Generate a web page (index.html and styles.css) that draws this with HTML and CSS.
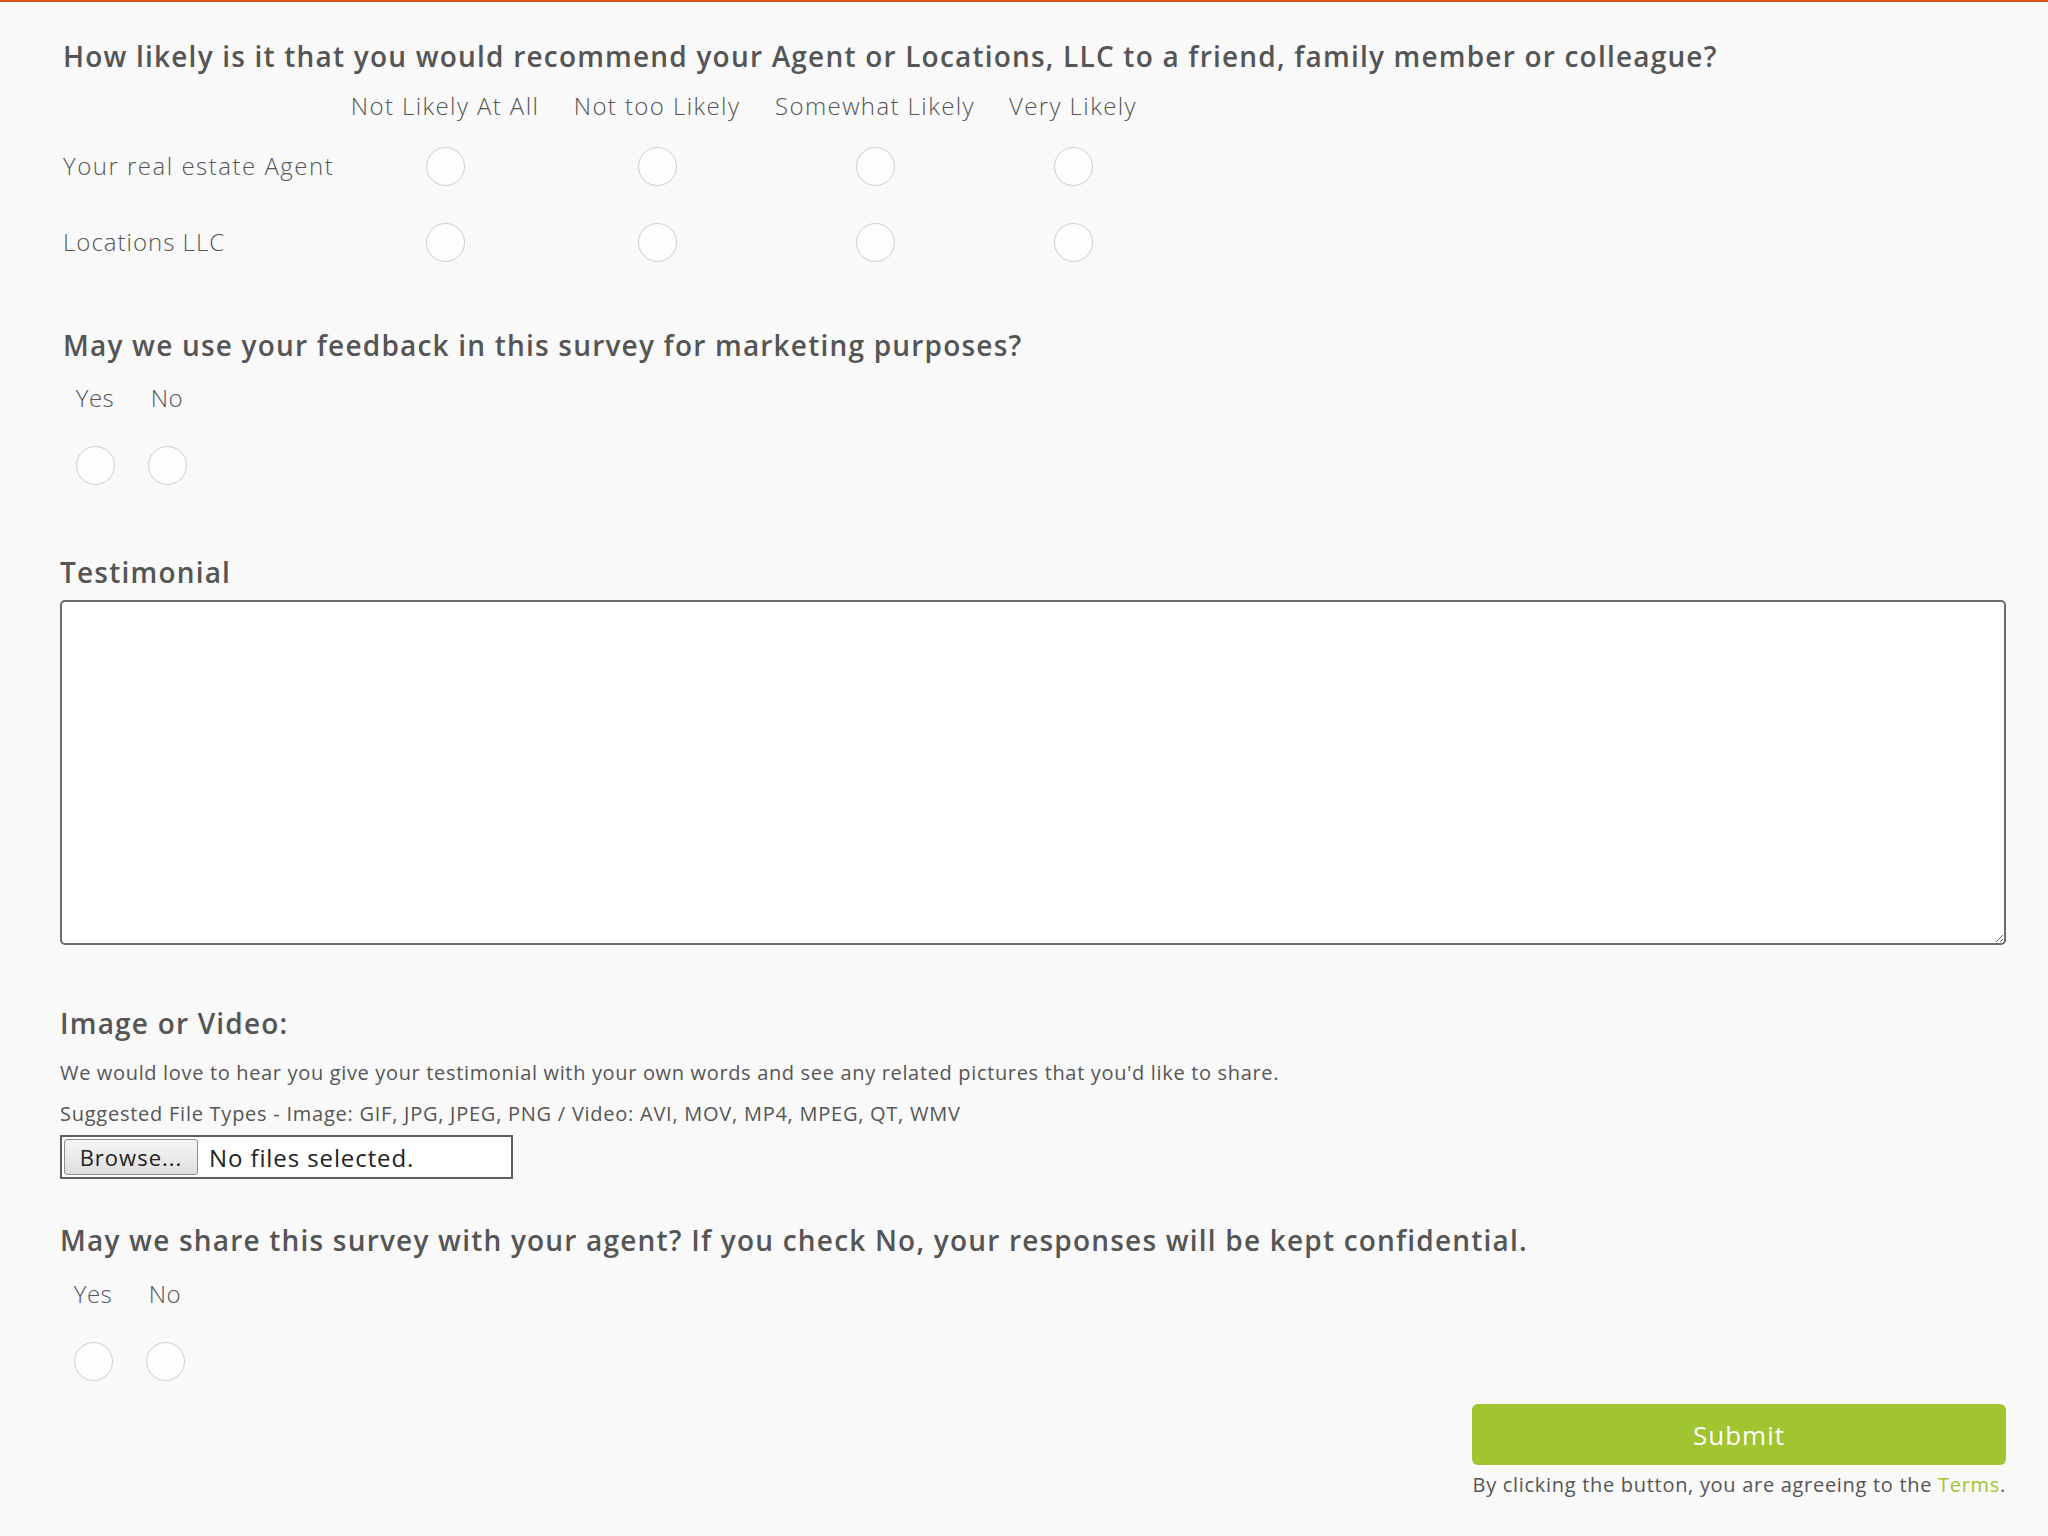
FILE: index.html
```html
<!DOCTYPE html>
<html lang="en">
<head>
<meta charset="utf-8">
<title>Survey</title>
<link rel="stylesheet" href="styles.css">
</head>
<body>
<div class="topbar"></div>
<form class="survey">
  <section class="q q-first">
    <h2 class="q-title">How likely is it that you would recommend your Agent or Locations, LLC to a friend, family member or colleague?</h2>
    <div class="matrix">
      <div class="m-blank"></div>
      <div class="m-head">Not Likely At All</div>
      <div class="m-head">Not too Likely</div>
      <div class="m-head">Somewhat Likely</div>
      <div class="m-head">Very Likely</div>

      <div class="m-label">Your real estate Agent</div>
      <div class="m-cell"><input type="radio" class="radio" name="agent"></div>
      <div class="m-cell"><input type="radio" class="radio" name="agent"></div>
      <div class="m-cell"><input type="radio" class="radio" name="agent"></div>
      <div class="m-cell"><input type="radio" class="radio" name="agent"></div>

      <div class="m-label m-label-short">Locations LLC</div>
      <div class="m-cell"><input type="radio" class="radio" name="llc"></div>
      <div class="m-cell"><input type="radio" class="radio" name="llc"></div>
      <div class="m-cell"><input type="radio" class="radio" name="llc"></div>
      <div class="m-cell"><input type="radio" class="radio" name="llc"></div>
    </div>
  </section>

  <section class="q q-marketing">
    <h2 class="q-title">May we use your feedback in this survey for marketing purposes?</h2>
    <div class="yesno">
      <span class="yn-label">Yes</span>
      <span class="yn-label">No</span>
      <input type="radio" class="radio" name="marketing">
      <input type="radio" class="radio" name="marketing">
    </div>
  </section>

  <section class="q q-testimonial">
    <h2 class="q-title">Testimonial</h2>
    <textarea class="testimonial"></textarea>
  </section>

  <section class="q q-media">
    <h2 class="q-title q-title-md">Image or Video:</h2>
    <p class="note">We would love to hear you give your testimonial with your own words and see any related pictures that you'd like to share.</p>
    <p class="note note-types">Suggested File Types - Image: GIF, JPG, JPEG, PNG / Video: AVI, MOV, MP4, MPEG, QT, WMV</p>
    <div class="filebox">
      <span class="browse">Browse...</span>
      <span class="filename">No files selected.</span>
    </div>
  </section>

  <section class="q q-share">
    <h2 class="q-title">May we share this survey with your agent? If you check No, your responses will be kept confidential.</h2>
    <div class="yesno yesno-share">
      <span class="yn-label">Yes</span>
      <span class="yn-label">No</span>
      <input type="radio" class="radio" name="share">
      <input type="radio" class="radio" name="share">
    </div>
  </section>

  <div class="submit-area">
    <button type="button" class="submit">Submit</button>
    <p class="terms">By clicking the button, you are agreeing to the <a class="terms-link">Terms</a>.</p>
  </div>
</form>
</body>
</html>
```

FILE: styles.css
```css
html, body {
  margin: 0;
  padding: 0;
}

body {
  background: #f9f9f9;
  font-family: "Open Sans", "DejaVu Sans", sans-serif;
  color: #555555;
}

.topbar {
  height: 2px;
  background: #dc5624;
}

.survey {
  padding: 0 42px 0 60px;
}

.q-title {
  margin: 0;
  font-size: 28px;
  line-height: 36px;
  font-weight: 600;
  letter-spacing: 1.2px;
  color: #555555;
  white-space: nowrap;
}

.q-title-md {
  line-height: 34px;
}

.q-first {
  padding-top: 36px;
}

.q-first .q-title {
  padding-left: 3px;
}

.matrix {
  display: grid;
  grid-template-columns: 273px 224px 200px 236px 160px;
  grid-template-rows: 38px 76px 76px;
  margin-top: 16px;
}

.m-head {
  align-self: start;
  text-align: center;
  font-size: 24px;
  line-height: 32px;
  font-weight: 300;
  letter-spacing: 1.4px;
  color: #555555;
  white-space: nowrap;
}

.m-label {
  align-self: center;
  padding-left: 3px;
  font-size: 24px;
  line-height: 32px;
  font-weight: 300;
  letter-spacing: 1.5px;
  color: #555555;
  white-space: nowrap;
}

.m-label-short {
  letter-spacing: 1px;
}

.m-cell {
  display: flex;
  align-items: center;
  justify-content: center;
}

.radio {
  appearance: none;
  -webkit-appearance: none;
  margin: 0;
  width: 39px;
  height: 39px;
  border-radius: 50%;
  border: 1.5px solid #cdcdcd;
  background: #fdfdfd;
  justify-self: center;
}

.q-marketing {
  margin-top: 47px;
}

.q-marketing .q-title {
  padding-left: 3px;
}

.yesno {
  display: grid;
  grid-template-columns: 56px 56px;
  column-gap: 16px;
  row-gap: 32px;
  padding-left: 7px;
  margin-top: 19px;
  align-items: center;
}

.yn-label {
  text-align: center;
  font-size: 24px;
  line-height: 32px;
  font-weight: 300;
  letter-spacing: 0.5px;
  color: #555555;
}

.q-testimonial {
  margin-top: 69px;
}

.testimonial {
  display: block;
  box-sizing: border-box;
  width: 100%;
  height: 345px;
  margin-top: 10px;
  border: 2px solid #6c6c6c;
  border-radius: 5px;
  background: #ffffff;
  resize: vertical;
  font-family: inherit;
}

.q-media {
  margin-top: 61px;
}

.note {
  margin: 18px 0 0;
  font-size: 20px;
  line-height: 30px;
  letter-spacing: 0.66px;
  color: #555555;
  white-space: nowrap;
}

.note-types {
  margin-top: 11px;
  letter-spacing: 0.75px;
}

.filebox {
  display: flex;
  align-items: center;
  box-sizing: border-box;
  width: 453px;
  height: 44px;
  margin-top: 6px;
  padding: 0 2px;
  border: 2px solid #5f5f5f;
  background: #ffffff;
}

.browse {
  box-sizing: border-box;
  display: flex;
  align-items: center;
  justify-content: center;
  width: 134px;
  height: 36px;
  border: 1px solid #8e8e8e;
  border-radius: 3px;
  background: linear-gradient(#f6f6f6, #dedede);
  font-size: 22px;
  letter-spacing: 1px;
  color: #222222;
}

.filename {
  margin-left: 11px;
  font-size: 24px;
  letter-spacing: 0.9px;
  color: #222222;
}

.q-share {
  margin-top: 43px;
}

.yesno-share {
  margin-top: 20px;
  row-gap: 32px;
  padding-left: 5px;
}

.submit-area {
  display: flex;
  flex-direction: column;
  align-items: flex-end;
  margin-top: 23px;
  padding-bottom: 40px;
}

.submit {
  width: 534px;
  height: 61px;
  border: none;
  border-radius: 6px;
  background: #a1c431;
  color: #ffffff;
  font-family: "Open Sans", "DejaVu Sans", sans-serif;
  font-size: 26px;
  font-weight: 400;
  letter-spacing: 1px;
  cursor: pointer;
}

.terms {
  width: 534px;
  margin: 8px 0 0;
  font-size: 20px;
  line-height: 24px;
  letter-spacing: 0.7px;
  text-align: right;
  color: #555555;
  white-space: nowrap;
}

.terms-link {
  color: #a1c431;
}
```
